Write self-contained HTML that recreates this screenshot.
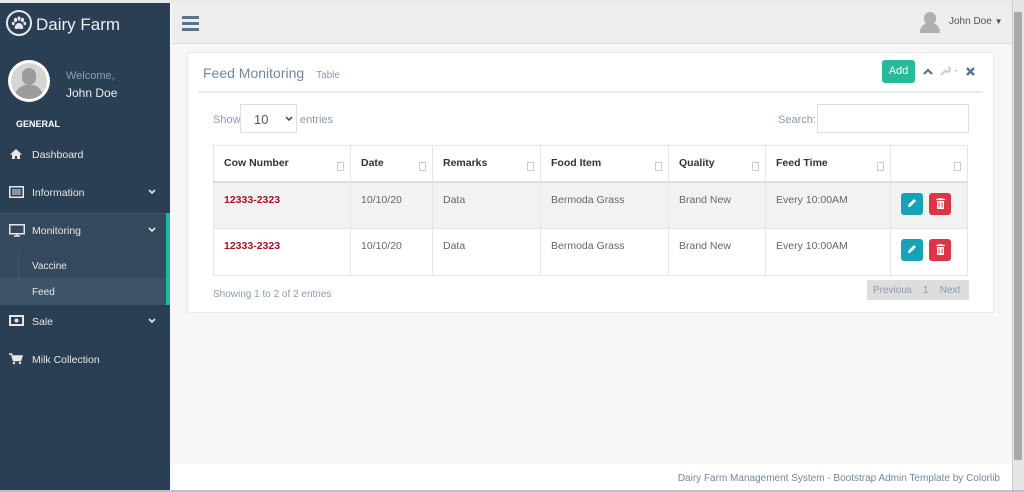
<!DOCTYPE html>
<html><head><meta charset="utf-8">
<style>
*{box-sizing:border-box;margin:0;padding:0}
body{width:1024px;height:492px;overflow:hidden;font-family:"Liberation Sans",Arial,sans-serif;background:#F7F7F7;position:relative;font-size:11px;color:#73879C}
.abs{position:absolute}
#topline{left:0;top:0;width:1024px;height:3px;background:#e8e8e8}
#side{left:0;top:3px;width:170px;height:487px;background:#2A3F54;color:#E7E7E7}
#nav{left:172px;top:3px;width:840px;height:41px;background:#EDEDED;border-bottom:1px solid #D9DEE4}
#sb{left:1012px;top:0;width:12px;height:492px;background:#e6e6e6;border-left:1px solid #ccc}
#sbt{left:1014px;top:12px;width:8px;height:448px;background:#a8a8a8}
#foot{left:172px;top:464px;width:840px;height:26px;background:#fff;text-align:right;padding:9px 12px 0 0;color:#73879C;font-size:10px}
#bot{left:0;top:490px;width:1024px;height:2px;background:#b8c0c8}
.menu{position:absolute;left:0;width:170px;font-size:10.5px;color:#E7E7E7;height:14px}
.menu svg.ic{position:absolute;left:9px;top:0}
.menu .t{position:absolute;left:32px;top:1px}
.chev{position:absolute;left:148px;top:3px}
#panel{left:187px;top:52px;width:807px;height:261px;background:#fff;border:1px solid #E6E9ED}
table{border-collapse:collapse;position:absolute;left:213px;top:145px;width:755px;font-size:10.5px;color:#73879C}
td,th{border:1px solid #e5e5e5;padding:0 10px;text-align:left;vertical-align:top}
th{height:36px;color:#333;font-weight:bold;padding-top:11px;position:relative;border-bottom:2px solid #ddd}
th:after{content:"";position:absolute;right:6px;top:16px;width:5px;height:7px;border:1px solid #ccc}
td{padding-top:11px;color:#666}
tr.r1 td{background:#F2F2F2;height:47px}
tr.r2 td{height:47px}
.cow{color:#A5122A;font-weight:bold}
.btn{display:inline-block;width:22px;height:22px;border-radius:3px;vertical-align:top;margin-right:6px}
.btn svg{display:block;margin:5px auto 0}
</style></head><body>
<div class="abs" id="topline"></div>
<div class="abs" id="side">
  <div class="abs" style="left:6px;top:7px;width:26px;height:26px;border:2px solid #E7E7E7;border-radius:50%"></div>
  <svg class="abs" style="left:11px;top:13px" width="16" height="14" viewBox="0 0 16 14"><g fill="#E7E7E7"><ellipse cx="4.5" cy="4" rx="1.6" ry="2.2"/><ellipse cx="8" cy="2.6" rx="1.6" ry="2.2"/><ellipse cx="11.5" cy="4" rx="1.6" ry="2.2"/><ellipse cx="2.2" cy="7.5" rx="1.4" ry="1.8"/><ellipse cx="13.8" cy="7.5" rx="1.4" ry="1.8"/><path d="M8 7c-3 0-5 4-4 5.5 1 1 3 .2 4 .2s3 .8 4-.2C13 11 11 7 8 7z"/></g></svg>
  <div class="abs" style="left:36px;top:12px;font-size:17px;color:#ECF0F1">Dairy Farm</div>
  <div class="abs" style="left:8px;top:57px;width:42px;height:42px;border-radius:50%;background:#fff;overflow:hidden">
    <div class="abs" style="left:3px;top:3px;width:36px;height:36px;border-radius:50%;background:#d5d5d5;overflow:hidden">
      <div class="abs" style="left:11px;top:5px;width:14px;height:17px;border-radius:7px;background:#9c9c9c"></div>
      <div class="abs" style="left:4px;top:22px;width:28px;height:20px;border-radius:12px 12px 0 0;background:#9c9c9c"></div>
    </div>
  </div>
  <div class="abs" style="left:66px;top:67px;font-size:11px;color:#8fa0b2">Welcome,</div>
  <div class="abs" style="left:66px;top:83px;font-size:12px;color:#ECF0F1">John Doe</div>
  <div class="abs" style="left:16px;top:116px;font-size:9px;font-weight:bold;color:#fff">GENERAL</div>
  <div class="menu" style="top:145px"><svg class="ic" width="14" height="12" viewBox="0 0 14 12"><path d="M7 1L1 6.5h2V11h3V8h2v3h3V6.5h2z" fill="#E7E7E7"/></svg><span class="t">Dashboard</span></div>
  <div class="menu" style="top:183px"><svg class="ic" width="15" height="12" viewBox="0 0 15 12"><rect x="0.75" y="0.75" width="13.5" height="10.5" fill="none" stroke="#E7E7E7" stroke-width="1.5"/><path d="M3 4h9M3 6h9M3 8h9" stroke="#E7E7E7"/></svg><span class="t">Information</span><svg class="chev" width="8" height="6" viewBox="0 0 8 6"><path d="M1 1l3 3 3-3" fill="none" stroke="#E7E7E7" stroke-width="1.6"/></svg></div>
  <div class="abs" style="left:0;top:210px;width:170px;height:92px;background:#34495E;border-top:1px solid #425668"></div>
  <div class="abs" style="left:166px;top:210px;width:4px;height:92px;background:#1ABB9C"></div>
  <div class="abs" style="left:0;top:275px;width:166px;height:27px;background:#3d5368"></div>
  <div class="abs" style="left:18px;top:248px;width:1px;height:46px;background:#3f566d"></div>
  <div class="menu" style="top:221px"><svg class="ic" width="16" height="13" viewBox="0 0 16 13"><rect x="0.75" y="0.75" width="14.5" height="9" fill="none" stroke="#E7E7E7" stroke-width="1.5"/><path d="M5 12h6M8 10v2" stroke="#E7E7E7" stroke-width="1.5"/></svg><span class="t">Monitoring</span><svg class="chev" width="8" height="6" viewBox="0 0 8 6"><path d="M1 1l3 3 3-3" fill="none" stroke="#E7E7E7" stroke-width="1.6"/></svg></div>
  <div class="menu" style="top:257px;font-size:10px"><span class="t">Vaccine</span></div>
  <div class="menu" style="top:283px;font-size:10px"><span class="t">Feed</span></div>
  <div class="menu" style="top:312px"><svg class="ic" width="15" height="11" viewBox="0 0 15 11"><rect x="1" y="1" width="13" height="9" fill="none" stroke="#E7E7E7" stroke-width="2"/><circle cx="7.5" cy="5.5" r="2" fill="#E7E7E7"/></svg><span class="t">Sale</span><svg class="chev" width="8" height="6" viewBox="0 0 8 6"><path d="M1 1l3 3 3-3" fill="none" stroke="#E7E7E7" stroke-width="1.6"/></svg></div>
  <div class="menu" style="top:350px"><svg class="ic" width="14" height="12" viewBox="0 0 14 12"><path d="M0 1h2.5l2 6.5h7L13 3H4" fill="none" stroke="#E7E7E7" stroke-width="1.5"/><path d="M4 3h9l-1.5 4.5h-7z" fill="#E7E7E7"/><circle cx="5" cy="10" r="1.2" fill="#E7E7E7"/><circle cx="11" cy="10" r="1.2" fill="#E7E7E7"/></svg><span class="t">Milk Collection</span></div>
</div>
<div class="abs" id="nav">
  <div class="abs" style="left:10px;top:13px;width:17px;height:3px;background:#5A738E"></div>
  <div class="abs" style="left:10px;top:19px;width:17px;height:3px;background:#5A738E"></div>
  <div class="abs" style="left:10px;top:25px;width:17px;height:3px;background:#5A738E"></div>
  <div class="abs" style="left:752px;top:9px;width:12px;height:13px;border-radius:6px;background:#b0b0b0"></div>
  <div class="abs" style="left:748px;top:20px;width:20px;height:10px;border-radius:9px 9px 0 0;background:#b0b0b0"></div>
  <div class="abs" style="left:777px;top:13px;font-size:10px;color:#515356">John Doe <span style="font-size:8px">&#9660;</span></div>
</div>
<div class="abs" id="panel">
  <div class="abs" style="left:15px;top:12px;font-size:14px;color:#73879C">Feed Monitoring <span style="font-size:10px;margin-left:8px;color:#8a9aab">Table</span></div>
  <div class="abs" style="left:10px;top:38px;width:785px;height:2px;background:#E6E9ED"></div>
  <div class="abs" style="left:694px;top:7px;width:33px;height:23px;background:#26B99A;border-radius:3px;color:#fff;font-size:11px;text-align:center;line-height:23px">Add</div>
  <svg class="abs" style="left:735px;top:15px" width="10" height="7" viewBox="0 0 10 7"><path d="M1 6l4-4 4 4" fill="none" stroke="#5A738E" stroke-width="2.2"/></svg>
  <svg class="abs" style="left:752px;top:13px" width="18" height="10" viewBox="0 0 18 10"><path d="M1 9l5-5M5 4a2.5 2.5 0 1 0 3-3" fill="none" stroke="#c8ced4" stroke-width="2"/><path d="M14 4l2 2 2-2z" fill="#c8ced4"/></svg>
  <svg class="abs" style="left:778px;top:14px" width="9" height="9" viewBox="0 0 9 9"><path d="M1 1l7 7M8 1L1 8" stroke="#5A738E" stroke-width="2.4"/></svg>
  <div class="abs" style="left:25px;top:61px;color:#8a9aab">Show</div>
  <div class="abs" style="left:52px;top:51px;width:57px;height:29px;border:1px solid #ddd;padding:7px 0 0 13px;font-size:13px;color:#555">10</div>
  <svg class="abs" style="left:97px;top:63px" width="8" height="6" viewBox="0 0 8 6"><path d="M1 1l3 3 3-3" fill="none" stroke="#555" stroke-width="1.6"/></svg>
  <div class="abs" style="left:112px;top:61px;color:#8a9aab">entries</div>
  <div class="abs" style="left:590px;top:61px;color:#8a9aab">Search:</div>
  <div class="abs" style="left:629px;top:51px;width:152px;height:29px;border:1px solid #ddd"></div>
  <div class="abs" style="left:25px;top:236px;color:#8a9aab;font-size:10px">Showing 1 to 2 of 2 entries</div>
  <div class="abs" style="left:679px;top:227px;width:102px;height:20px;background:#ddd;color:#8a9aab;font-size:10px;padding:5px 0 0 6px">Previous &nbsp;&nbsp;&nbsp;1 &nbsp;&nbsp;&nbsp;Next</div>
</div>
<table>
<tr><th style="width:137px">Cow Number</th><th style="width:82px">Date</th><th style="width:108px">Remarks</th><th style="width:128px">Food Item</th><th style="width:97px">Quality</th><th style="width:125px">Feed Time</th><th></th></tr>
<tr class="r1"><td class="cow">12333-2323</td><td>10/10/20</td><td>Data</td><td>Bermoda Grass</td><td>Brand New</td><td>Every 10:00AM</td><td style="padding:10px 0 0 10px"><span class="btn" style="background:#17A2B8"><svg width="10" height="10" viewBox="0 0 10 10"><path d="M1 9l.5-2.5L7 1l2 2-5.5 5.5z" fill="#fff"/></svg></span><span class="btn" style="background:#DC3545"><svg width="9" height="11" viewBox="0 0 9 11"><path d="M0 1.5h9M3 1.5V0h3v1.5" stroke="#fff" stroke-width="1.2" fill="none"/><path d="M1 3h7v8H1z" fill="#fff"/><path d="M3 4.5v5M6 4.5v5" stroke="#DC3545"/></svg></span></td></tr>
<tr class="r2"><td class="cow">12333-2323</td><td>10/10/20</td><td>Data</td><td>Bermoda Grass</td><td>Brand New</td><td>Every 10:00AM</td><td style="padding:10px 0 0 10px"><span class="btn" style="background:#17A2B8"><svg width="10" height="10" viewBox="0 0 10 10"><path d="M1 9l.5-2.5L7 1l2 2-5.5 5.5z" fill="#fff"/></svg></span><span class="btn" style="background:#DC3545"><svg width="9" height="11" viewBox="0 0 9 11"><path d="M0 1.5h9M3 1.5V0h3v1.5" stroke="#fff" stroke-width="1.2" fill="none"/><path d="M1 3h7v8H1z" fill="#fff"/><path d="M3 4.5v5M6 4.5v5" stroke="#DC3545"/></svg></span></td></tr>
</table>
<div class="abs" id="foot">Dairy Farm Management System - Bootstrap Admin Template by Colorlib</div>
<div class="abs" id="sb"></div><div class="abs" id="sbt"></div>
<div class="abs" id="bot"></div>
</body></html>
